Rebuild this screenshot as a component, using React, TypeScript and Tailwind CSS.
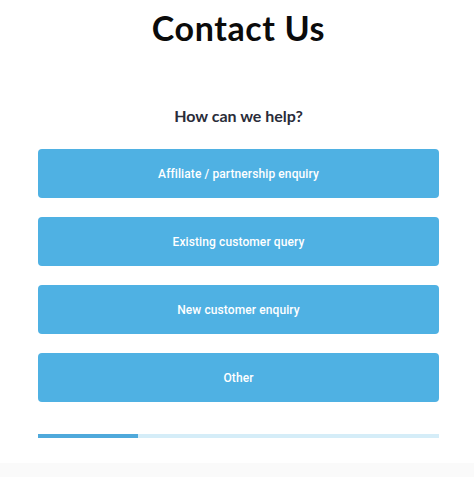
import React from "react";

const options = [
  "Affiliate / partnership enquiry",
  "Existing customer query",
  "New customer enquiry",
  "Other",
];

export default function App() {
  return (
    <div className="w-[474px] h-[477px] bg-white flex flex-col overflow-hidden">
      <div className="flex-1 flex flex-col items-center pl-[38px] pr-[35px]">
        <h1
          className="mt-[8px] text-[34px] leading-[40px] font-bold text-[#0b0b0b] tracking-[0.6px]"
          style={{ fontFamily: '"Lato", "Noto Sans", sans-serif' }}
        >
          Contact Us
        </h1>
        <h2
          className="mt-[58px] text-[16px] leading-[20px] font-bold text-[#2a2c39]"
          style={{ fontFamily: '"Lato", "Noto Sans", sans-serif' }}
        >
          How can we help?
        </h2>
        <div className="mt-[23px] w-full flex flex-col gap-[19px]">
          {options.map((o) => (
            <button
              key={o}
              className="w-full h-[49px] rounded-[4px] bg-[#4fb1e3] text-white text-[12px] font-medium tracking-[0.1px]"
              style={{ fontFamily: 'Roboto, "Liberation Sans", sans-serif' }}
            >
              {o}
            </button>
          ))}
        </div>
        <div className="mt-[32px] w-full h-[4px] bg-[#d5edf8] flex">
          <div className="w-[100px] h-full bg-[#4fa9db]" />
        </div>
      </div>
      <div className="h-[14px] bg-[#fafafa]" />
    </div>
  );
}
